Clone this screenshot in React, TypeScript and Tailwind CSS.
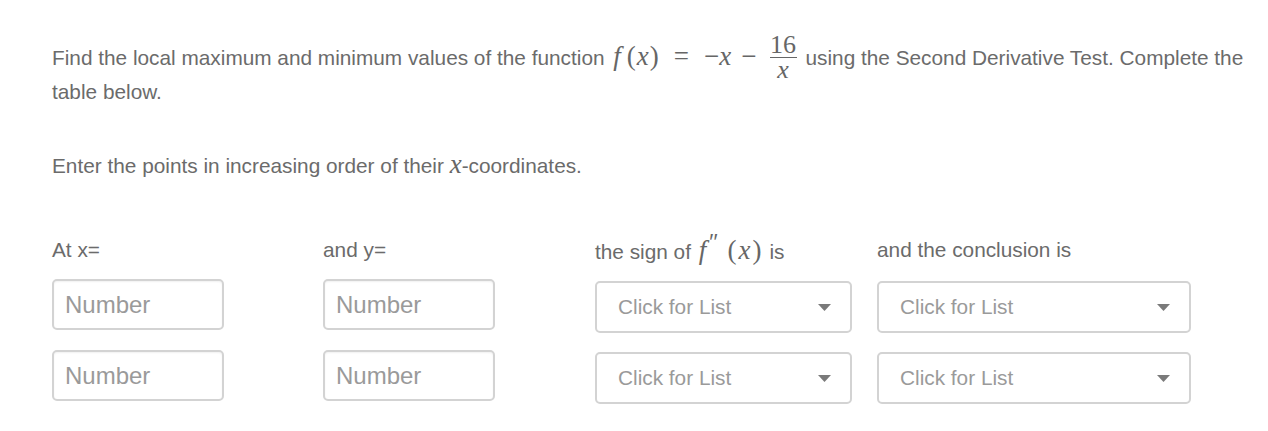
import React from "react";

const M: React.FC<{ children: React.ReactNode; className?: string }> = ({ children, className }) => (
  <span className={"[font-family:'Liberation_Serif',serif] text-[27px] text-[#666] " + (className ?? "")}>{children}</span>
);

function NumberBox() {
  return (
    <div className="w-[172px] h-[51px] border-2 border-[#d3d3d3] rounded-[5px] flex items-center pl-[11px] shadow-[inset_0_1px_2px_rgba(0,0,0,0.06)] bg-white">
      <span className="text-[24px] text-[#9a9a9a]">Number</span>
    </div>
  );
}

function SelectBox({ w }: { w: string }) {
  return (
    <div className={w + " h-[52px] mt-[2px] border-2 border-[#d3d3d3] rounded-[5px] flex items-center justify-between pl-[21px] pr-[19px] bg-white"}>
      <span className="text-[20.8px] text-[#9a9a9a]">Click for List</span>
      <svg width="13" height="7" viewBox="0 0 13 7"><path d="M0 0 L13 0 L6.5 7 Z" fill="#7a7a7a" /></svg>
    </div>
  );
}

export default function App() {
  return (
    <div className="w-[1268px] h-[431px] bg-white pl-[52px] [font-family:'Liberation_Sans',Arial,sans-serif] text-[#6b6b6b] text-[20.8px]">
      <p className="pt-[39px] leading-[34px]">
        Find the local maximum and minimum values of the function{" "}
        <M className="italic ml-[3px]">f</M>
        <M className="ml-[6px]">(</M>
        <M className="italic mx-[1px]">x</M>
        <M>)</M>
        <M className="mx-[15px]">=</M>
        <M>−</M>
        <M className="italic">x</M>
        <M className="mx-[10px]">−</M>
        <span className="inline-flex flex-col items-center align-middle -my-[10px] relative top-[-2px] [font-family:'Liberation_Serif',serif] text-[26px] text-[#666] leading-[22px] px-[3px]">
          <span>16</span>
          <span className="w-[27px] h-[1.5px] bg-[#666] my-[1px]"></span>
          <span className="italic">x</span>
        </span>
        <span className="ml-[6px]">using the Second Derivative Test. Complete the table below.</span>
      </p>
      <p className="mt-[38px] leading-[34px]">
        Enter the points in increasing order of their <M className="italic">x</M>-coordinates.
      </p>
      <div className="mt-[50px] grid grid-cols-[271px_272px_282px_314px] items-center">
        <div className="leading-[34px] h-[34px]">At x=</div>
        <div className="leading-[34px] h-[34px]">and y=</div>
        <div className="leading-[34px] h-[34px] whitespace-nowrap">
          the sign of <M className="italic ml-[2px]">f</M>
          <span className="[font-family:'Liberation_Sans',sans-serif] text-[22px] relative top-[-10px] leading-none text-[#666] ml-[3px]">′′</span>
          <M className="ml-[10px]">(</M>
          <M className="italic mx-[2px]">x</M>
          <M>)</M>
          <span className="ml-[8px]">is</span>
        </div>
        <div className="leading-[34px] h-[34px]">and the conclusion is</div>
      </div>
      <div className="grid grid-cols-[271px_272px_282px_314px] gap-y-[17px] mt-[12px]">
        <NumberBox />
        <NumberBox />
        <SelectBox w="w-[257px]" />
        <SelectBox w="w-[314px]" />
        <NumberBox />
        <NumberBox />
        <SelectBox w="w-[257px]" />
        <SelectBox w="w-[314px]" />
      </div>
    </div>
  );
}
